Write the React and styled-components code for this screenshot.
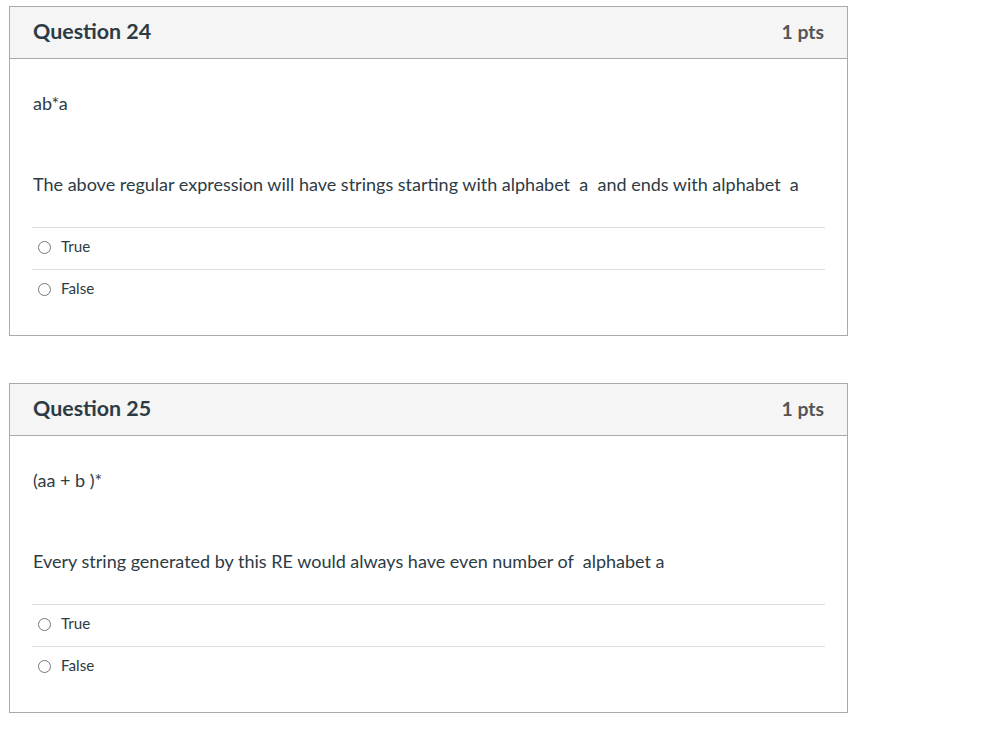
import React from "react";
import styled, { createGlobalStyle } from "styled-components";

const Global = createGlobalStyle`
  html, body { margin: 0; padding: 0; background: #fff; }
  body { font-family: Lato, "Open Sans", "Liberation Sans", sans-serif; color: #2d3b45; }
`;

const Page = styled.div`
  padding: 6px 0 0 9px;
  width: 839px;
  display: flex;
  flex-direction: column;
  gap: 47px;
`;

const Card = styled.div`
  border: 1px solid #aaaaaa;
  background: #fff;
`;

const Header = styled.div`
  background: #f5f5f5;
  border-bottom: 1px solid #aaaaaa;
  display: flex;
  align-items: center;
  justify-content: space-between;
  padding: 0 23px 3px 23px;
  box-sizing: border-box;
  height: 52px;
`;

const Title = styled.div`
  font-size: 21.4px;
  font-weight: 700;
  color: #2d3b45;
`;

const Points = styled.div`
  font-size: 19.4px;
  font-weight: 700;
  color: #555;
`;

const Body = styled.div`
  padding: 31px 22px 24px 22px;
`;

const Para = styled.p`
  margin: 0 0 ${(p) => p.$mb || 0}px 0;
  padding-left: 1px;
  font-size: 18px;
  line-height: 26px;
  color: #2d3b45;
  white-space: pre-wrap;
`;

const Options = styled.div`
  display: flex;
  flex-direction: column;
`;

const Option = styled.label`
  display: flex;
  align-items: center;
  box-sizing: border-box;
  height: 42px;
  padding: 0 0 5px 6px;
  border-top: 1px solid #dddddd;
  font-size: 15.2px;
  color: #2d3b45;
`;

const Radio = styled.span`
  width: 11px;
  height: 11px;
  border: 1px solid #777;
  border-radius: 50%;
  margin-right: 10px;
  margin-top: 2px;
`;

const questions = [
  {
    n: 24,
    expr: "ab*a",
    text: "The above regular expression will have strings starting with alphabet\u00a0 a\u00a0 and ends with alphabet\u00a0 a",
  },
  {
    n: 25,
    expr: "(aa + b )*",
    text: "Every string generated by this RE would always have even number of\u00a0 alphabet a",
  },
];

export default function App() {
  return (
    <>
      <Global />
      <Page>
        {questions.map((q) => (
          <Card key={q.n}>
            <Header>
              <Title>Question {q.n}</Title>
              <Points>1 pts</Points>
            </Header>
            <Body>
              <Para $mb={55}>{q.expr}</Para>
              <Para $mb={30}>{q.text}</Para>
              <Options>
                <Option>
                  <Radio />
                  True
                </Option>
                <Option>
                  <Radio />
                  False
                </Option>
              </Options>
            </Body>
          </Card>
        ))}
      </Page>
    </>
  );
}
